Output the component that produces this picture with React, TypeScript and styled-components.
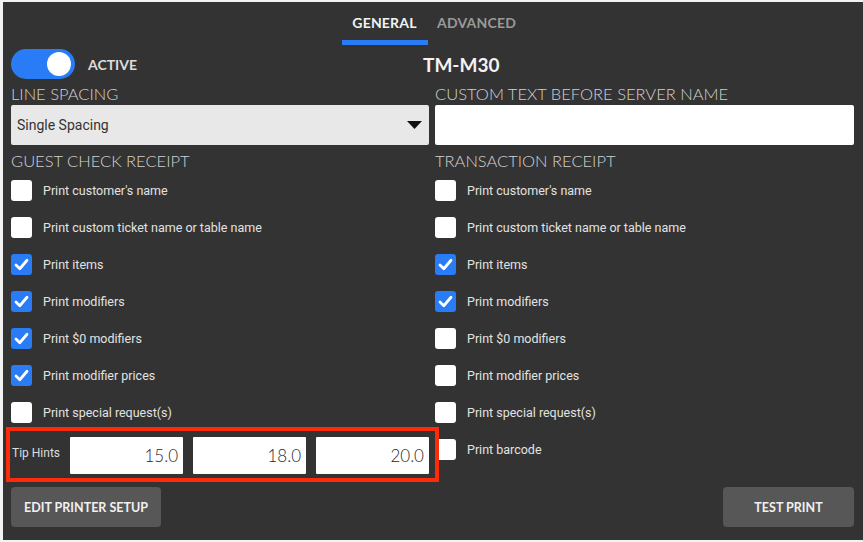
import React from "react";
import styled, { createGlobalStyle } from "styled-components";

const GlobalStyle = createGlobalStyle`
  html, body {
    margin: 0;
    padding: 0;
    background: #f2f2f2;
  }
  * {
    box-sizing: border-box;
  }
`;

const Panel = styled.div`
  margin: 2px 0 2px 3px;
  height: 538px;
  background: #333333;
  padding: 0 9px 0 8px;
  display: flex;
  flex-direction: column;
  font-family: Roboto, "Liberation Sans", sans-serif;
`;

const Tabs = styled.div`
  display: flex;
  justify-content: center;
  height: 43px;
  margin-left: 2px;
`;

const Tab = styled.div<{ active?: boolean }>`
  width: ${(p) => (p.active ? "86px" : "98px")};
  display: flex;
  align-items: center;
  justify-content: center;
  padding-top: 3px;
  font-family: Lato, "Liberation Sans", sans-serif;
  font-weight: 700;
  font-size: 14px;
  letter-spacing: 0.2px;
  color: ${(p) => (p.active ? "#f2f2f2" : "#9a9a9a")};
  border-bottom: 5px solid ${(p) => (p.active ? "#2a7cf6" : "transparent")};
`;

const Header = styled.div`
  display: flex;
  align-items: center;
  height: 30px;
  margin-top: 4px;
`;

const ToggleGroup = styled.div`
  width: 412px;
  display: flex;
  align-items: center;
  gap: 13px;
`;

const Toggle = styled.div<{ on?: boolean }>`
  width: 64px;
  height: 30px;
  border-radius: 15px;
  background: ${(p) => (p.on ? "#2a7cf6" : "#777")};
  display: flex;
  align-items: center;
  justify-content: ${(p) => (p.on ? "flex-end" : "flex-start")};
  padding: 0 4px;
`;

const Knob = styled.div`
  width: 24px;
  height: 24px;
  border-radius: 50%;
  background: #ffffff;
`;

const ToggleLabel = styled.span`
  font-family: Lato, "Liberation Sans", sans-serif;
  font-weight: 700;
  font-size: 14px;
  color: #dddddd;
`;

const PrinterName = styled.span`
  font-family: Lato, "Liberation Sans", sans-serif;
  font-weight: 700;
  font-size: 19px;
  color: #f4f4f4;
`;

const Columns = styled.div`
  display: grid;
  grid-template-columns: 418px 419px;
  column-gap: 6px;
  margin-top: 5px;
`;

const Column = styled.div`
  display: flex;
  flex-direction: column;
`;

const SectionLabel = styled.div<{ spaced?: boolean }>`
  height: 21px;
  line-height: 21px;
  margin-top: ${(p) => (p.spaced ? "6px" : "0")};
  font-family: Lato, "Liberation Sans", sans-serif;
  font-weight: 300;
  font-size: 16.5px;
  color: #d0d0d0;
  white-space: nowrap;
`;

const Select = styled.div`
  height: 40px;
  background: #e8e8e8;
  border-radius: 2px;
  display: flex;
  align-items: center;
  justify-content: space-between;
  padding: 0 7px 0 6px;
  font-size: 14px;
  color: #333;
`;

const TextBox = styled.div`
  height: 40px;
  background: #ffffff;
  border-radius: 2px;
`;

const CheckRow = styled.div`
  height: 37px;
  display: flex;
  align-items: center;
  gap: 11px;
  font-size: 12.5px;
  color: #e2e2e2;
`;

const Box = styled.div<{ checked?: boolean }>`
  width: 21px;
  height: 21px;
  border-radius: 3px;
  background: ${(p) => (p.checked ? "#2a7cf6" : "#ffffff")};
  display: flex;
  align-items: center;
  justify-content: center;
  flex-shrink: 0;
`;

const TipRow = styled.div`
  position: relative;
  height: 49px;
  display: flex;
  align-items: center;
  gap: 10px;

  &::after {
    content: "";
    position: absolute;
    top: -4px;
    left: -5px;
    right: -10px;
    bottom: -2px;
    border: 4px solid #ff2a0a;
    z-index: 2;
    pointer-events: none;
  }
`;

const TipLabel = styled.span`
  flex: 0 0 46px;
  white-space: nowrap;
  font-size: 12px;
  color: #dddddd;
  margin-left: 1px;
  margin-top: -6px;
`;

const TipInput = styled.div`
  flex: 1;
  height: 37px;
  background: #ffffff;
  border-radius: 1px;
  display: flex;
  align-items: center;
  justify-content: flex-end;
  padding-right: 5px;
  font-family: Lato, "Liberation Sans", sans-serif;
  font-weight: 300;
  font-size: 17px;
  color: #2a2a2a;
`;

const Footer = styled.div`
  display: flex;
  justify-content: space-between;
  margin-top: 7px;
`;

const Button = styled.div<{ w: number }>`
  width: ${(p) => p.w}px;
  height: 40px;
  border-radius: 4px;
  background: #575757;
  display: flex;
  align-items: center;
  justify-content: center;
  font-family: Lato, "Liberation Sans", sans-serif;
  font-weight: 700;
  font-size: 12.5px;
  color: #f0f0f0;
`;

const Check = () => (
  <svg width="17" height="17" viewBox="0 0 20 20">
    <path
      d="M3.5 10.5 L8 15 L16.5 5"
      fill="none"
      stroke="#ffffff"
      strokeWidth="3.2"
      strokeLinecap="round"
      strokeLinejoin="round"
    />
  </svg>
);

const Caret = () => (
  <svg width="15" height="8" viewBox="0 0 15 8">
    <path d="M0 0 H15 L7.5 8 Z" fill="#111" />
  </svg>
);

const guest: [string, boolean][] = [
  ["Print customer's name", false],
  ["Print custom ticket name or table name", false],
  ["Print items", true],
  ["Print modifiers", true],
  ["Print $0 modifiers", true],
  ["Print modifier prices", true],
  ["Print special request(s)", false],
];

const transaction: [string, boolean][] = [
  ["Print customer's name", false],
  ["Print custom ticket name or table name", false],
  ["Print items", true],
  ["Print modifiers", true],
  ["Print $0 modifiers", false],
  ["Print modifier prices", false],
  ["Print special request(s)", false],
  ["Print barcode", false],
];

const Option = ({ label, checked }: { label: string; checked: boolean }) => (
  <CheckRow>
    <Box checked={checked}>{checked && <Check />}</Box>
    <span>{label}</span>
  </CheckRow>
);

export default function App() {
  return (
    <>
      <GlobalStyle />
      <Panel>
        <Tabs>
          <Tab active>GENERAL</Tab>
          <Tab>ADVANCED</Tab>
        </Tabs>
        <Header>
          <ToggleGroup>
            <Toggle on>
              <Knob />
            </Toggle>
            <ToggleLabel>ACTIVE</ToggleLabel>
          </ToggleGroup>
          <PrinterName>TM-M30</PrinterName>
        </Header>
        <Columns>
          <Column>
            <SectionLabel>LINE SPACING</SectionLabel>
            <Select>
              <span>Single Spacing</span>
              <Caret />
            </Select>
            <SectionLabel spaced>GUEST CHECK RECEIPT</SectionLabel>
            {guest.map(([label, checked]) => (
              <Option key={label} label={label} checked={checked} />
            ))}
            <TipRow>
              <TipLabel>Tip Hints</TipLabel>
              <TipInput>15.0</TipInput>
              <TipInput>18.0</TipInput>
              <TipInput>20.0</TipInput>
            </TipRow>
          </Column>
          <Column>
            <SectionLabel>CUSTOM TEXT BEFORE SERVER NAME</SectionLabel>
            <TextBox />
            <SectionLabel spaced>TRANSACTION RECEIPT</SectionLabel>
            {transaction.map(([label, checked]) => (
              <Option key={label} label={label} checked={checked} />
            ))}
          </Column>
        </Columns>
        <Footer>
          <Button w={150}>EDIT PRINTER SETUP</Button>
          <Button w={131}>TEST PRINT</Button>
        </Footer>
      </Panel>
    </>
  );
}
